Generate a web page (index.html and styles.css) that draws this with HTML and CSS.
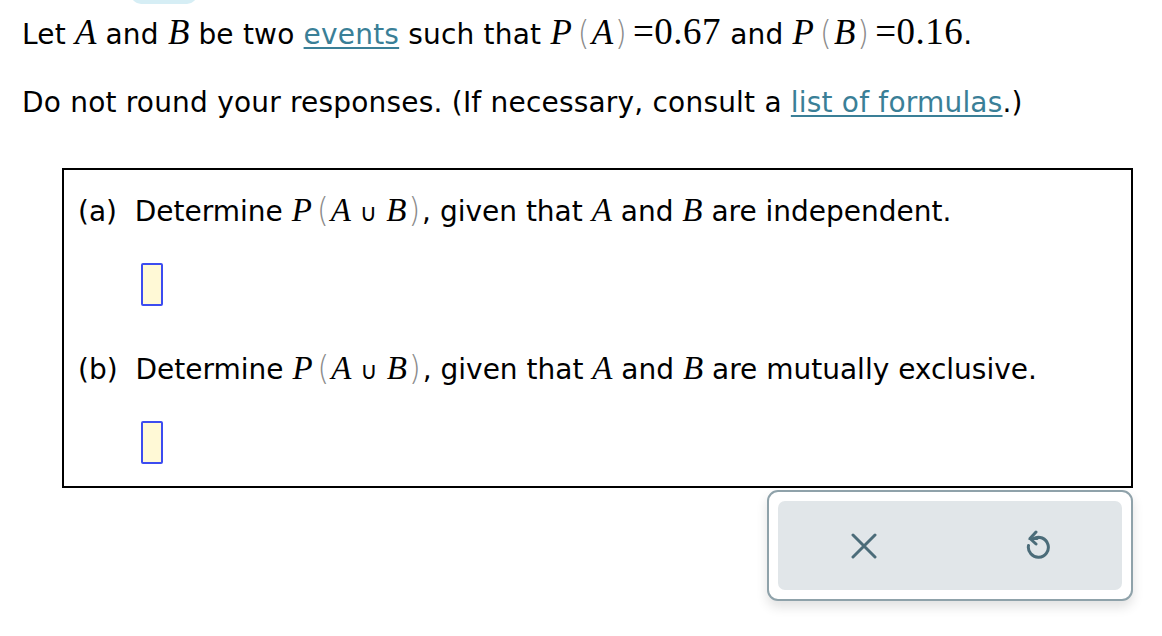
FILE: index.html
```html
<!DOCTYPE html>
<html>
<head>
<meta charset="utf-8">
<link rel="stylesheet" href="styles.css">
</head>
<body>
<div class="pill"></div>
<p class="line first">Let <i class="m">A</i> and <i class="m">B</i> be two <a class="lnk" href="#">events</a> such that <i class="m fn">P</i><span class="par">(</span><i class="m">A</i><span class="par">)</span><span class="mn">=0.67</span> and <i class="m fn">P</i><span class="par">(</span><i class="m">B</i><span class="par">)</span><span class="mn">=0.16</span>.</p>
<p class="line second">Do not round your responses. (If necessary, consult a <a class="lnk" href="#">list of formulas</a>.)</p>
<div class="box">
  <div class="part">
    <p class="line q">(a)&nbsp; Determine <i class="m fn">P</i><span class="par">(</span><i class="m">A</i> <span class="cup">∪</span> <i class="m">B</i><span class="par">)</span>, given that <i class="m">A</i> and <i class="m">B</i> are independent.</p>
    <div class="ans"></div>
  </div>
  <div class="part">
    <p class="line q">(b)&nbsp; Determine <i class="m fn">P</i><span class="par">(</span><i class="m">A</i> <span class="cup">∪</span> <i class="m">B</i><span class="par">)</span>, given that <i class="m">A</i> and <i class="m">B</i> are mutually exclusive.</p>
    <div class="ans"></div>
  </div>
</div>
<div class="tools">
  <div class="toolsin">
    <button class="btn" aria-label="clear">
      <svg width="26" height="26" viewBox="0 0 26 26"><path d="M2 2L24 24M24 2L2 24" stroke="#4b6c79" stroke-width="3" stroke-linecap="round" fill="none"/></svg>
    </button>
    <button class="btn" aria-label="undo">
      <svg width="28" height="32" viewBox="0 0 28 32"><path d="M6.5 15.5A10 10 0 1 0 11.5 8.5L15 8.5" stroke="#4b6c79" stroke-width="3" stroke-linecap="round" fill="none"/><path d="M14 2L8 8.5L14 14" stroke="#4b6c79" stroke-width="3" stroke-linecap="round" stroke-linejoin="round" fill="none"/></svg>
    </button>
  </div>
</div>
</body>
</html>
```
FILE: styles.css
```css
html, body { margin: 0; padding: 0; background: #fff; }
body {
  font-family: "DejaVu Sans", Verdana, sans-serif;
  font-size: 28px;
  letter-spacing: 0.2px;
  color: #000;
  width: 1162px;
  height: 636px;
  overflow: hidden;
  position: relative;
}
.pill {
  position: absolute;
  left: 131px;
  top: -20px;
  width: 66px;
  height: 24px;
  border-radius: 10px;
  background: #d6eef5;
}
.line { margin: 0; line-height: 32px; white-space: nowrap; }
.first { padding: 16px 0 0 22px; }
.second { padding: 36px 0 0 22px; }
.m { font-family: "Liberation Serif", "Times New Roman", serif; font-size: 35px; letter-spacing: 0; }
.fn { margin-right: 4px; }
.mn { font-family: "Liberation Serif", "Times New Roman", serif; font-size: 37px; letter-spacing: 0.5px; margin-left: 4px; }
.par {
  font-family: "DejaVu Sans", sans-serif;
  font-weight: 200;
  color: #8a8a8a;
  font-size: 30px;
  display: inline-block;
  transform: scaleY(1.1);
  margin: 0 2px;
}
.cup { font-size: 24px; }
.lnk { color: #3a7f97; text-decoration: underline; text-underline-offset: 3px; text-decoration-thickness: 2px; }
.box {
  margin: 49px 0 0 62px;
  width: 1067px;
  height: 316px;
  border: 2px solid #000;
  letter-spacing: 0;
}
.box .m { font-size: 33px; }
.box .fn { margin-right: 3px; }
.part { padding: 0 0 0 14px; }
.q { padding-top: 24px; }
.ans {
  margin: 34px 0 0 63px;
  width: 18px;
  height: 39px;
  border: 2px solid #3c4cf0;
  background: #fff9d6;
  border-radius: 2px;
}
.part + .part .q { padding-top: 46px; }
.tools {
  margin: 2px 0 0 767px;
  width: 344px;
  height: 89px;
  border: 2px solid #8fa2aa;
  border-radius: 11px;
  padding: 9px;
  box-shadow: 0 6px 12px rgba(0,0,0,0.12);
  background: #fff;
  display: flex;
}
.toolsin {
  flex: 1;
  background: #e1e6e9;
  border-radius: 7px;
  display: flex;
  align-items: center;
  justify-content: space-around;
}
.btn {
  background: none;
  border: 0;
  padding: 0;
  width: 120px;
  height: 60px;
  display: flex;
  align-items: center;
  justify-content: center;
}
```
